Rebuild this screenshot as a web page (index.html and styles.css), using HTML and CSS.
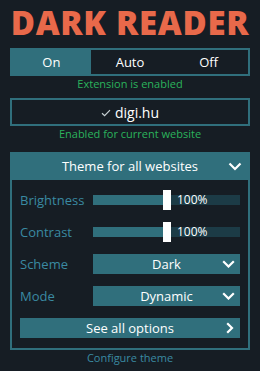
FILE: index.html
```html
<!DOCTYPE html>
<html>
<head>
<meta charset="utf-8">
<link rel="stylesheet" href="styles.css">
</head>
<body>
<h1 class="title">DARK READER</h1>
<div class="toggle">
  <div class="seg active">On</div>
  <div class="seg">Auto</div>
  <div class="seg">Off</div>
</div>
<div class="note">Extension is enabled</div>
<div class="site">
  <svg class="check" width="10" height="8" viewBox="0 0 10 8"><path d="M1 4.2 L3.6 6.6 L9 1.2" fill="none" stroke="#c9d2d6" stroke-width="1.2"/></svg>
  <span>digi.hu</span>
</div>
<div class="note">Enabled for current website</div>
<div class="panel">
  <div class="panel-head">
    <span>Theme for all websites</span>
    <svg class="chev-big" width="14" height="9" viewBox="0 0 14 9"><path d="M1.5 1.5 L7 7 L12.5 1.5" fill="none" stroke="#fff" stroke-width="2.2"/></svg>
  </div>
  <div class="panel-body">
    <div class="row">
      <div class="label">Brightness</div>
      <div class="slider">
        <div class="fill" style="width:70px"></div>
        <div class="thumb"></div>
        <div class="val">100%</div>
      </div>
    </div>
    <div class="row">
      <div class="label">Contrast</div>
      <div class="slider">
        <div class="fill" style="width:70px"></div>
        <div class="thumb"></div>
        <div class="val">100%</div>
      </div>
    </div>
    <div class="row">
      <div class="label">Scheme</div>
      <div class="select">
        <span>Dark</span>
        <svg class="chev" width="13" height="8" viewBox="0 0 13 8"><path d="M1.2 1.2 L6.5 6.5 L11.8 1.2" fill="none" stroke="#fff" stroke-width="2.2"/></svg>
      </div>
    </div>
    <div class="row">
      <div class="label">Mode</div>
      <div class="select">
        <span>Dynamic</span>
        <svg class="chev" width="13" height="8" viewBox="0 0 13 8"><path d="M1.2 1.2 L6.5 6.5 L11.8 1.2" fill="none" stroke="#fff" stroke-width="2.2"/></svg>
      </div>
    </div>
    <div class="options">
      <span>See all options</span>
      <svg class="arrow" width="8" height="12" viewBox="0 0 8 12"><path d="M1.2 1.2 L6 6 L1.2 10.8" fill="none" stroke="#fff" stroke-width="2.2"/></svg>
    </div>
  </div>
</div>
<div class="foot">Configure theme</div>
</body>
</html>
```

FILE: styles.css
```css
html, body {
  margin: 0;
  background: #161d24;
}
body {
  padding: 0 10px;
  font-family: "Open Sans", "DejaVu Sans", sans-serif;
  color: #fff;
  width: 240px;
}
.title {
  margin: 0 0 2px;
  height: 46px;
  line-height: 46px;
  font-size: 33px;
  font-weight: 800;
  color: #e8694a;
  text-align: center;
  letter-spacing: 0.7px;
  white-space: nowrap;
}
.toggle {
  display: flex;
  height: 28px;
  border: 2px solid #306f7c;
  box-sizing: border-box;
}
.seg {
  flex: 1;
  display: flex;
  align-items: center;
  justify-content: center;
  font-size: 13px;
}
.seg.active {
  background: #306f7c;
}
.note {
  height: 22px;
  line-height: 15px;
  text-align: center;
  font-size: 11px;
  color: #2bb35c;
}
.site {
  height: 28px;
  box-sizing: border-box;
  border: 2px solid #306f7c;
  display: flex;
  align-items: center;
  justify-content: center;
  gap: 4px;
  font-size: 14px;
}
.site + .note {
  height: 26px;
}
.check {
  margin-top: 1px;
}
.panel {
  display: flex;
  flex-direction: column;
}
.panel-head {
  height: 28px;
  background: #306f7c;
  display: flex;
  align-items: center;
  justify-content: center;
  position: relative;
  font-size: 13px;
}
.chev-big {
  position: absolute;
  right: 8px;
  top: 10px;
}
.panel-body {
  border: 2px solid #306f7c;
  border-top: 0;
  padding: 10px 8px;
  display: flex;
  flex-direction: column;
  gap: 12px;
}
.row {
  display: flex;
  height: 20px;
  align-items: center;
}
.label {
  width: 73px;
  font-size: 13px;
  color: #3a8aa2;
}
.slider {
  flex: 1;
  height: 10px;
  background: #1c3b46;
  position: relative;
}
.fill {
  height: 10px;
  background: #306f7c;
}
.thumb {
  position: absolute;
  left: 70px;
  top: -5px;
  width: 8px;
  height: 20px;
  background: #fff;
}
.val {
  position: absolute;
  left: 84px;
  top: -4px;
  line-height: 18px;
  font-size: 12px;
  color: #fff;
}
.select {
  flex: 1;
  height: 20px;
  background: #306f7c;
  display: flex;
  align-items: center;
  justify-content: center;
  position: relative;
  font-size: 13px;
}
.chev {
  position: absolute;
  right: 5px;
  top: 6px;
}
.options {
  height: 20px;
  background: #306f7c;
  display: flex;
  align-items: center;
  justify-content: center;
  position: relative;
  font-size: 13px;
}
.arrow {
  position: absolute;
  right: 6px;
  top: 4px;
}
.foot {
  text-align: center;
  font-size: 11px;
  color: #3a8aa2;
  line-height: 15px;
}
```
